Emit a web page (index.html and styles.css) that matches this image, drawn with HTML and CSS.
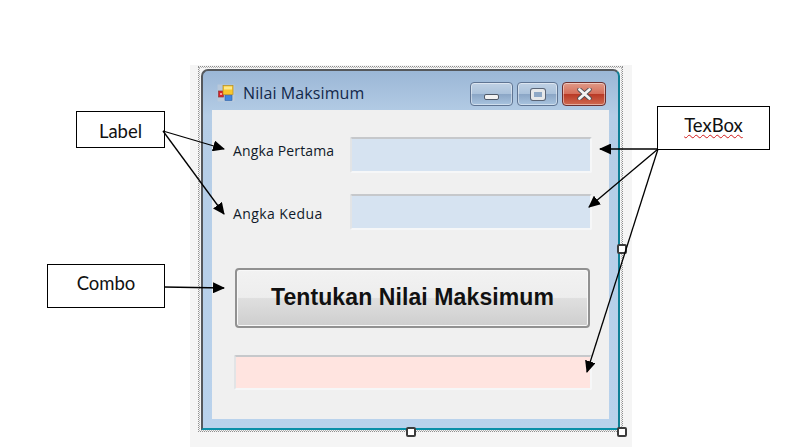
FILE: index.html
```html
<!DOCTYPE html>
<html lang="id">
<head>
<meta charset="utf-8">
<title>Nilai Maksimum</title>
<link rel="stylesheet" href="styles.css">
</head>
<body>
<div class="stage">
  <div class="designer">
    <div class="selection">
      <div class="window">
        <div class="titlebar">
          <svg class="app-icon" width="18" height="18" viewBox="0 0 18 18">
            <rect x="0.5" y="0.5" width="17" height="17" fill="#c9cfd8" opacity="0.55"/>
            <rect x="1.5" y="7" width="5" height="6" fill="#d8222a" stroke="#8d3a3a" stroke-width="0.7"/>
            <rect x="3" y="9" width="2" height="2" fill="#f5a0a0"/>
            <rect x="6" y="1.5" width="10" height="9" fill="#f8c62c" stroke="#b58d20" stroke-width="0.7"/>
            <rect x="7" y="2.5" width="8" height="3" fill="#fde88a"/>
            <rect x="8" y="11.5" width="7" height="5" fill="#3f86e0" stroke="#2d5fa5" stroke-width="0.6"/>
          </svg>
          <span class="title">Nilai Maksimum</span>
          <div class="controls">
            <div class="ctl ctl-blue ctl-min"><span class="glyph-min"></span></div>
            <div class="ctl ctl-blue ctl-max"><span class="glyph-max"></span></div>
            <div class="ctl ctl-close">
              <svg width="17" height="12" viewBox="0 0 17 12"><path d="M3.5 1.5 L13.5 10.5 M13.5 1.5 L3.5 10.5" stroke="#4b4f55" stroke-width="4.4" stroke-linecap="round"/><path d="M3.5 1.5 L13.5 10.5 M13.5 1.5 L3.5 10.5" stroke="#f4f4f4" stroke-width="2.8" stroke-linecap="round"/></svg>
            </div>
          </div>
        </div>
        <div class="client">
          <div class="row row-first">
            <span class="field-label">Angka Pertama</span>
            <div class="textbox textbox-blue"></div>
          </div>
          <div class="row row-second">
            <span class="field-label">Angka Kedua</span>
            <div class="textbox textbox-blue"></div>
          </div>
          <button class="action" type="button">Tentukan Nilai Maksimum</button>
          <div class="textbox textbox-pink"></div>
        </div>
      </div>
    </div>
    <span class="handle handle-right"></span>
    <span class="handle handle-bottom"></span>
    <span class="handle handle-corner"></span>
  </div>

  <div class="callout callout-label">Label</div>
  <div class="callout callout-combo">Combo</div>
  <div class="callout callout-texbox"><span class="squiggle">TexBox</span></div>

  <svg class="arrows" width="798" height="447" viewBox="0 0 798 447">
    <defs>
      <marker id="head" markerUnits="userSpaceOnUse" markerWidth="12" markerHeight="11" refX="11" refY="5.5" orient="auto">
        <path d="M0 0 L12 5.5 L0 11 Z" fill="#000"/>
      </marker>
    </defs>
    <g fill="none" stroke="#000" stroke-width="1.3" marker-end="url(#head)">
      <line x1="163" y1="131" x2="224" y2="149"/>
      <line x1="163" y1="131" x2="224" y2="214"/>
      <line x1="164" y1="287" x2="224" y2="288"/>
      <line x1="658" y1="149" x2="600" y2="149"/>
      <line x1="658" y1="149" x2="589" y2="207"/>
      <line x1="658" y1="149" x2="587" y2="372"/>
    </g>
  </svg>
</div>
</body>
</html>
```

FILE: styles.css
```css
* { box-sizing: border-box; }
html, body { margin: 0; padding: 0; background: #fff; overflow: hidden; }
.stage { position: relative; width: 798px; height: 447px; background: #fff; }

.designer {
  position: absolute; left: 190px; top: 65px; width: 442px; height: 382px;
  background: #f5f5f5; padding: 1px 0 0 8px;
}
.selection {
  width: 425px; height: 366px; padding: 2px 1px 3px 2px;
  border: 1px dotted #8f8f8f; outline: 1px dotted #b5b5b5; outline-offset: -2px;
}
.window {
  display: flex; flex-direction: column;
  width: 419px; height: 361px;
  padding: 0 9px 9px;
  border: 2px solid #55585c; border-right-color: #0f7f95; border-bottom-color: #0b8fa8;
  border-radius: 7px 7px 0 0;
  background: linear-gradient(to bottom, #9bb7d6 0, #b5cde6 45px, #b9d2ec 100%);
}
.titlebar { display: flex; align-items: center; height: 39px; flex: none; padding: 5px 0 0 5px; }
.app-icon { flex: none; margin-right: 8px; }
.title { font: 16px "Open Sans", sans-serif; color: #13284a; letter-spacing: 0.1px; }
.controls { display: flex; gap: 4px; margin: 2px 3px 0 auto; }
.ctl {
  display: flex; align-items: center; justify-content: center;
  height: 24px; border-radius: 4px; border: 1px solid #5f7492;
  box-shadow: inset 0 0 0 1px rgba(255,255,255,.45);
}
.ctl-blue { background: linear-gradient(to bottom, #c0d1e4 0, #abc2db 48%, #8ba6c6 52%, #a9c4df 100%); }
.ctl-min { width: 43px; padding-top: 6px; }
.ctl-max { width: 41px; }
.ctl-close {
  width: 44px; border-color: #6b3030;
  background: linear-gradient(to bottom, #e09a88 0, #d5705c 48%, #b93a26 52%, #cf6a50 100%);
}
.glyph-min { width: 15px; height: 6px; background: #f2f2f2; border: 1px solid #4f5968; border-radius: 2px; }
.glyph-max { width: 14px; height: 11px; background: #8ea8c6; border: 3px solid #e6e8ea; border-radius: 2px; box-shadow: 0 0 0 1px #5a6475; }

.client {
  flex: 1; display: flex; flex-direction: column;
  background: #f0f0f0; padding: 27px 17px 0 21px;
}
.row { display: flex; align-items: center; height: 36px; }
.row-second { margin-top: 21px; }
.field-label {
  flex: none; width: 117px; padding-bottom: 10px;
  font: 14px "Open Sans", sans-serif; color: #101a2a; letter-spacing: 0.15px; white-space: nowrap;
}
.row-second .field-label { padding: 2px 0 0; letter-spacing: 0.4px; }
.textbox {
  border: 2px solid #f6f7f8; border-top-color: #c6c8cb; border-left-color: #e2e4e6;
  border-radius: 2px;
}
.row .textbox { flex: 1; height: 100%; }
.textbox-blue { background: #d6e3f1; }
.textbox-pink { height: 35px; margin: 27px 0 0 1px; background: #ffe4e0; }
.action {
  display: block; width: 355px; height: 60px; margin: 38px 0 0 2px; padding: 0 0 2px;
  border: 2px solid #919191; border-radius: 4px;
  background: linear-gradient(to bottom, #f2f2f2 0, #ededed 49%, #dfdfdf 51%, #cecece 100%);
  box-shadow: inset 0 0 0 1px #f8f8f8;
  font: bold 23px "Liberation Sans", sans-serif; color: #111; letter-spacing: 0.1px; white-space: nowrap;
}

.handle {
  position: absolute; width: 10px; height: 10px; background: #fff;
  border: 2px solid #3c3c3c; border-radius: 2px;
}
.handle-right { left: 427px; top: 179px; }
.handle-bottom { left: 216px; top: 362px; }
.handle-corner { left: 427px; top: 362px; }

.callout {
  position: absolute; display: flex; justify-content: center; background: #fff;
  border: 1px solid #000; font: 18.5px "Lato", sans-serif; color: #111;
}
.callout-label { left: 76px; top: 111px; width: 89px; height: 37px; padding-top: 8px; }
.callout-combo { left: 47px; top: 264px; width: 118px; height: 44px; padding-top: 7px; }
.callout-texbox { left: 657px; top: 106px; width: 113px; height: 44px; padding-top: 7px; }
.squiggle { height: 24px; text-decoration: underline wavy #d01818 1px; text-underline-offset: 2px; }

.arrows { position: absolute; left: 0; top: 0; pointer-events: none; }
```
